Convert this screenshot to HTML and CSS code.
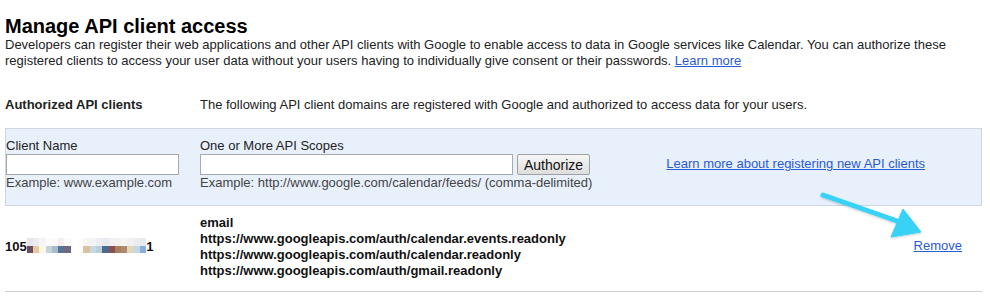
FILE: index.html
```html
<!DOCTYPE html>
<html>
<head>
<meta charset="utf-8">
<link rel="stylesheet" href="styles.css">
</head>
<body>
<div class="page">
  <h1 class="title">Manage API client access</h1>
  <p class="intro">Developers can register their web applications and other API clients with Google to enable access to data in Google services like Calendar. You can authorize these registered clients to access your user data without your users having to individually give consent or their passwords. <a href="#" class="link">Learn more</a></p>

  <div class="section-head">
    <div class="section-label">Authorized API clients</div>
    <div class="section-desc">The following API client domains are registered with Google and authorized to access data for your users.</div>
  </div>

  <div class="form-box">
    <div class="field field-name">
      <label class="field-label">Client Name</label>
      <input class="text-input name-input" type="text">
      <div class="hint">Example: www.example.com</div>
    </div>
    <div class="field field-scopes">
      <label class="field-label">One or More API Scopes</label>
      <div class="input-row">
        <input class="text-input scope-input" type="text">
        <button class="btn">Authorize</button>
      </div>
      <div class="hint">Example: http://www.google.com/calendar/feeds/ (comma-delimited)</div>
    </div>
    <div class="field field-link">
      <a href="#" class="link">Learn more about registering new API clients</a>
    </div>
  </div>

  <div class="client-row">
    <div class="client-id"><span>105</span><span class="pix"><span></span><span></span><span></span><span></span><span></span><span></span><span></span><span></span><span></span><span></span><span></span><span></span><span></span><span></span><span></span><span></span><span></span><span></span><span></span></span><span>1</span></div>
    <div class="scopes">
      <div>email</div>
      <div>https://www.googleapis.com/auth/calendar.events.readonly</div>
      <div>https://www.googleapis.com/auth/calendar.readonly</div>
      <div>https://www.googleapis.com/auth/gmail.readonly</div>
    </div>
    <div class="remove-cell"><a href="#" class="link">Remove</a></div>
  </div>
</div>
<svg class="arrow" width="990" height="299" viewBox="0 0 990 299">
  <defs>
    <filter id="sh" x="-20%" y="-20%" width="140%" height="140%">
      <feDropShadow dx="0" dy="1" stdDeviation="1.2" flood-color="#000" flood-opacity="0.22"/>
    </filter>
  </defs>
  <g filter="url(#sh)" fill="#37d2f7" stroke="#37d2f7">
    <line x1="823" y1="195" x2="900" y2="222" stroke-width="5" stroke-linecap="round"/>
    <polygon points="903,209 921,232 891,237" stroke-width="1" stroke-linejoin="round"/>
  </g>
</svg>
</body>
</html>
```

FILE: styles.css
```css
html, body {
  margin: 0;
  padding: 0;
  background: #fff;
}
body {
  font-family: "Liberation Sans", Arial, sans-serif;
  font-size: 13px;
  color: #222;
}
.page {
  padding: 0 8px 0 5px;
}
.title {
  font-size: 20px;
  font-weight: bold;
  color: #000;
  margin: 15px 0 0 0;
  line-height: 22px;
}
.intro {
  margin: 0;
  line-height: 16px;
}
.link {
  color: #2a5bd7;
  text-decoration: underline;
}
.section-head {
  display: flex;
  margin-top: 28px;
  line-height: 16px;
}
.section-label {
  width: 195px;
  font-weight: bold;
}
.form-box {
  margin-top: 15px;
  background: #e8f0fc;
  border: 1px solid #cfd6df;
  display: flex;
  align-items: flex-start;
  padding: 9px 0 16px 0;
  height: 51px;
}
.field {
  display: flex;
  flex-direction: column;
  line-height: 16px;
}
.field-name {
  width: 194px;
}
.field-label {
  display: block;
}
.text-input {
  box-sizing: border-box;
  height: 21px;
  border: 1px solid #a9a9a9;
  background: #fff;
  margin: 0;
  padding: 0 2px;
}
.name-input {
  width: 173px;
}
.scope-input {
  width: 313px;
}
.input-row {
  display: flex;
  gap: 4px;
}
.btn {
  box-sizing: border-box;
  height: 21px;
  width: 73px;
  font-family: "Liberation Sans", Arial, sans-serif;
  font-size: 14px;
  color: #111;
  background: linear-gradient(#f6f6f6, #dedede);
  border: 1px solid #a0a0a0;
  border-radius: 2px;
  padding: 0;
}
.hint {
  color: #444;
}
.field-link {
  margin-left: 74px;
  padding-top: 18px;
}
.client-row {
  display: flex;
  align-items: center;
  border-bottom: 1px solid #cfcfcf;
  padding: 9px 0 12px 0;
}
.client-id {
  width: 195px;
  display: flex;
  align-items: center;
  font-weight: bold;
  color: #111;
  line-height: 16px;
}
.pix {
  display: inline-flex;
  flex-direction: row;
  height: 15px;
  margin-top: -4px;
}
.pix span {
  width: 6.3px;
  height: 15px;
  --t: #f2f2f4;
  --b: #fff;
  background: linear-gradient(var(--t) 0, var(--t) 50%, var(--b) 50%, var(--b) 100%);
}
.pix span:nth-child(1) { --t: #e6e6ea; --b: #6b4f5e; }
.pix span:nth-child(2) { --t: #ececf0; --b: #e8c9a0; }
.pix span:nth-child(3) { --t: #f5f5f5; --b: #fdf8e6; }
.pix span:nth-child(4) { --t: #fcfcfc; --b: #c5d3dd; }
.pix span:nth-child(5) { --t: #fafafa; --b: #a8bccf; }
.pix span:nth-child(6) { --t: #f4eef0; --b: #5a7394; }
.pix span:nth-child(7) { --t: #fafafa; --b: #6a6a80; }
.pix span:nth-child(8) { --t: #fff; --b: #fff; }
.pix span:nth-child(9) { --t: #fdfdfb; --b: #fdfdfd; }
.pix span:nth-child(10) { --t: #f8f6f0; --b: #d8c3a0; }
.pix span:nth-child(11) { --t: #f4f4f4; --b: #c7d8e0; }
.pix span:nth-child(12) { --t: #eeeef2; --b: #b8cfda; }
.pix span:nth-child(13) { --t: #eaeaee; --b: #4a6a90; }
.pix span:nth-child(14) { --t: #f0eef0; --b: #8a5050; }
.pix span:nth-child(15) { --t: #f4f0f0; --b: #a88060; }
.pix span:nth-child(16) { --t: #f6f4f0; --b: #b08a6a; }
.pix span:nth-child(17) { --t: #f0f0f0; --b: #e0d8b8; }
.pix span:nth-child(18) { --t: #ececf0; --b: #c0d8e8; }
.pix span:nth-child(19) { --t: #e8e8ee; --b: #8ab0d8; }
.scopes {
  flex: 1;
  font-weight: bold;
  color: #111;
  line-height: 16px;
}
.remove-cell {
  padding-right: 20px;
  padding-bottom: 4px;
}
.arrow {
  position: absolute;
  left: 0;
  top: 0;
  pointer-events: none;
}
```
